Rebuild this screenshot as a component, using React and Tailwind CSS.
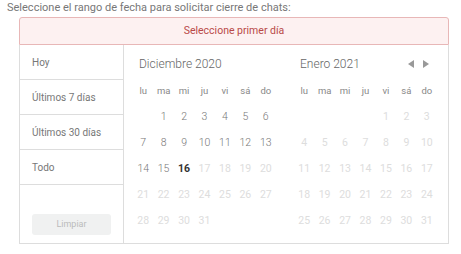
import React from "react";

const heads = ["lu", "ma", "mi", "ju", "vi", "sá", "do"];

function Month({ title, offset, days, activeUntil, bold, arrows }) {
  const cells = [];
  for (let i = 0; i < offset; i++) cells.push(null);
  for (let d = 1; d <= days; d++) cells.push(d);
  return (
    <div className="w-[143px] flex flex-col">
      <div className="h-[33px] flex items-center pt-[5px] pl-[6px]">
        <span className="text-[12px] font-light text-[#666]">{title}</span>
        {arrows && (
          <div className="ml-auto mr-[8px] flex items-center gap-[9px]">
            <svg width="6" height="8" viewBox="0 0 6 8"><path d="M6 0 L0 4 L6 8 Z" fill="#999" /></svg>
            <svg width="6" height="8" viewBox="0 0 6 8"><path d="M0 0 L6 4 L0 8 Z" fill="#999" /></svg>
          </div>
        )}
      </div>
      <div className="grid grid-cols-7">
        {heads.map((h) => (
          <div key={h} className="h-[26px] flex items-center justify-center text-[9.5px] text-[#888]">{h}</div>
        ))}
        {cells.map((d, i) => (
          <div
            key={i}
            className={
              "h-[26px] flex items-center justify-center text-[10.5px] " +
              (d === null
                ? ""
                : d === bold
                ? "font-bold text-[#333]"
                : d <= activeUntil
                ? "font-light text-[#777]"
                : "text-[#ddd]")
            }
          >
            {d}
          </div>
        ))}
      </div>
    </div>
  );
}

export default function App() {
  const presets = ["Hoy", "Últimos 7 días", "Últimos 30 días", "Todo"];
  return (
    <div className="w-[461px] h-[254px] bg-white font-['Roboto',sans-serif] overflow-hidden">
      <p className="pl-[7px] pt-[0px] text-[11px] leading-[15px] text-[#777]">
        Seleccione el rango de fecha para solicitar cierre de chats:
      </p>
      <div className="ml-[19px] mt-[2px] w-[430px] h-[227px] flex flex-col">
        <div className="h-[28px] shrink-0 bg-[#fdf1f1] border border-[#e8b7b7] rounded-t-[3px] flex items-center justify-center text-[10.5px] text-[#b94a48]">
          Seleccione primer día
        </div>
        <div className="flex flex-1 border-x border-b border-[#ddd]">
          <div className="w-[104px] border-r border-[#ddd] flex flex-col">
            {presets.map((p) => (
              <div key={p} className="h-[35px] border-b border-[#ddd] flex items-center pl-[12px] text-[10px] text-[#777]">
                {p}
              </div>
            ))}
            <div className="flex-1 flex flex-col justify-end px-[12px] pb-[8px]">
              <div className="h-[21px] rounded-[3px] bg-[#f0f1f1] flex items-center justify-center text-[9px] text-[#bbb]">
                Limpiar
              </div>
            </div>
          </div>
          <div className="flex-1 flex pl-[9px] gap-[18px]">
            <Month title="Diciembre 2020" offset={1} days={31} activeUntil={16} bold={16} />
            <Month title="Enero 2021" offset={4} days={31} activeUntil={0} arrows />
          </div>
        </div>
      </div>
    </div>
  );
}
